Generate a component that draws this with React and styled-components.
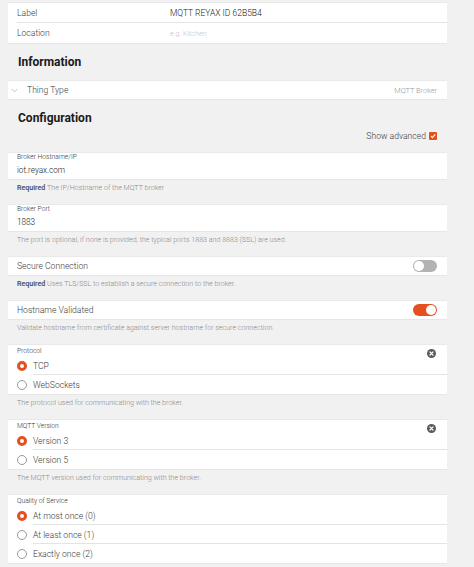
import React from 'react';
import styled, { createGlobalStyle, css } from 'styled-components';

const ACCENT = '#e5501e';

const GlobalStyle = createGlobalStyle`
  html, body {
    margin: 0;
    padding: 0;
    background: #f1f1f1;
  }

  body {
    font-family: Roboto, "Liberation Sans", sans-serif;
    color: #444;
  }
`;

/**
 * Data
 * ------------
 */

const protocols = ['TCP', 'WebSockets'];
const versions = ['Version 3', 'Version 5'];
const qos = ['At most once (0)', 'At least once (1)', 'Exactly once (2)'];

// Icons
function ChevronDown() {
  return (
    <svg width="7" height="5" viewBox="0 0 7 5">
      <path d="M0.8 1 L3.5 3.8 L6.2 1" fill="none" stroke="#bdbdbd" strokeWidth="0.9" />
    </svg>
  );
}

function ClearIcon() {
  return (
    <svg width="9" height="9" viewBox="0 0 10 10">
      <circle cx="5" cy="5" r="5" fill="#5a5a5a" />
      <path d="M3.3 3.3 L6.7 6.7 M6.7 3.3 L3.3 6.7" stroke="#fff" strokeWidth="1.3" strokeLinecap="round" />
    </svg>
  );
}

function CheckIcon() {
  return (
    <svg width="8" height="8" viewBox="0 0 8 8">
      <path d="M2 4.2 L3.4 5.6 L6.2 2.4" fill="none" stroke="#fff" strokeWidth="1.1" />
    </svg>
  );
}

// Components
function RadioGroup({ label, options, selected, clearable }) {
  return (
    <Panel>
      <GroupHeader>
        <SmallLabel>{label}</SmallLabel>
        {clearable && <ClearIcon />}
      </GroupHeader>
      {options.map((opt, i) => (
        <RadioRow key={opt} last={i === options.length - 1}>
          <Radio checked={i === selected} />
          <span>{opt}</span>
        </RadioRow>
      ))}
    </Panel>
  );
}

function Footer({ required, children }) {
  return (
    <Info>
      {required && <strong>Required </strong>}
      {children}
    </Info>
  );
}

function App() {
  return (
    <>
      <GlobalStyle />
      <Page>
        <Panel>
          <ListRow>
            <RowLabel>Label</RowLabel>
            <RowValue>MQTT REYAX ID 62B5B4</RowValue>
          </ListRow>
          <ListRow last>
            <RowLabel>Location</RowLabel>
            <RowValue placeholder>e.g. Kitchen</RowValue>
          </ListRow>
        </Panel>

        <SectionTitle>Information</SectionTitle>
        <Panel>
          <ThingRow>
            <ChevronDown />
            <ThingLabel>Thing Type</ThingLabel>
            <ThingValue>MQTT Broker</ThingValue>
          </ThingRow>
        </Panel>

        <SectionTitle compact>Configuration</SectionTitle>
        <Advanced>
          Show advanced
          <Checkbox>
            <CheckIcon />
          </Checkbox>
        </Advanced>

        <FieldPanel>
          <SmallLabel>Broker Hostname/IP</SmallLabel>
          <FieldValue>iot.reyax.com</FieldValue>
        </FieldPanel>
        <Footer required>The IP/Hostname of the MQTT broker</Footer>

        <FieldPanel>
          <SmallLabel>Broker Port</SmallLabel>
          <FieldValue>1883</FieldValue>
        </FieldPanel>
        <Footer>
          The port is optional, if none is provided, the typical ports 1883 and 8883 (SSL) are used.
        </Footer>

        <Panel>
          <ToggleRow>
            <span>Secure Connection</span>
            <Toggle />
          </ToggleRow>
        </Panel>
        <Footer required>Uses TLS/SSL to establish a secure connection to the broker.</Footer>

        <Panel>
          <ToggleRow>
            <span>Hostname Validated</span>
            <Toggle on />
          </ToggleRow>
        </Panel>
        <Footer>Validate hostname from certificate against server hostname for secure connection.</Footer>

        <RadioGroup label="Protocol" options={protocols} selected={0} clearable />
        <Footer>The protocol used for communicating with the broker.</Footer>

        <RadioGroup label="MQTT Version" options={versions} selected={0} clearable />
        <Footer>The MQTT version used for communicating with the broker.</Footer>

        <RadioGroup label="Quality of Service" options={qos} selected={0} />
      </Page>
    </>
  );
}

/**
 * Styles
 * ------------
 */

const Page = styled.div`
  width: 439px;
  margin-left: 8px;
  padding-top: 2px;
  padding-bottom: 4px;
`;

const Panel = styled.div`
  background: #fff;
  border-top: 1px solid #e9e9e9;
  border-bottom: 1px solid #e6e6e6;
`;

const separator = (left) => css`
  &::after {
    content: '';
    position: absolute;
    left: ${left}px;
    right: 0;
    bottom: 0;
    height: 1px;
    background: #e4e4e4;
  }
`;

const ListRow = styled.div`
  position: relative;
  display: flex;
  align-items: center;
  height: 20px;
  padding: 0 10px 0 9px;
  font-size: 8.6px;
  font-weight: 300;

  ${({ last }) => !last && separator(9)}
`;

const RowLabel = styled.span`
  width: 153px;
  color: #3a3a3a;
`;

const RowValue = styled.span`
  color: ${({ placeholder }) => (placeholder ? '#c4c4c4' : '#222')};
  font-size: ${({ placeholder }) => (placeholder ? '7.2px' : '8.5px')};
`;

const SectionTitle = styled.h2`
  margin: 0;
  padding: 11px 10px ${({ compact }) => (compact ? 0 : 11)}px;
  font-size: 12px;
  line-height: 14px;
  font-weight: 700;
  color: #1a1a1a;
`;

const ThingRow = styled.div`
  display: flex;
  align-items: center;
  height: 18px;
  padding: 0 10px 0 3px;
  font-size: 8.6px;
  font-weight: 300;
`;

const ThingLabel = styled.span`
  margin-left: 9px;
  color: #3a3a3a;
`;

const ThingValue = styled.span`
  margin-left: auto;
  font-size: 7.4px;
  color: #9a9a9a;
`;

const Advanced = styled.div`
  display: flex;
  justify-content: flex-end;
  align-items: center;
  gap: 3px;
  height: 22px;
  margin-bottom: 5px;
  padding-right: 10px;
  font-size: 8.6px;
  font-weight: 300;
  color: #3a3a3a;
`;

const Checkbox = styled.span`
  display: flex;
  width: 8px;
  height: 8px;
  background: ${ACCENT};
  border-radius: 1px;
`;

const FieldPanel = styled(Panel)`
  height: 28px;
  box-sizing: border-box;
  padding: 0 9px;
`;

const SmallLabel = styled.div`
  font-size: 6.7px;
  line-height: 8px;
  font-weight: 300;
  color: #333;
`;

const FieldValue = styled.div`
  margin-top: 3px;
  font-size: 8.2px;
  line-height: 12px;
  font-weight: 300;
  color: #222;
`;

const Info = styled.div`
  padding: 4px 9px 12px;
  font-size: 7.1px;
  line-height: 8px;
  font-weight: 300;
  color: #8a8a8a;

  strong {
    color: #444;
    font-weight: 500;
  }
`;

const ToggleRow = styled.div`
  display: flex;
  align-items: center;
  justify-content: space-between;
  height: 18px;
  padding: 0 10px 0 9px;
  font-size: 8.6px;
  font-weight: 300;
  color: #3a3a3a;
`;

const Toggle = styled.span`
  position: relative;
  width: 24px;
  height: 12px;
  border-radius: 6px;
  background: ${({ on }) => (on ? ACCENT : '#b3b3b3')};

  &::after {
    content: '';
    position: absolute;
    top: 1px;
    left: ${({ on }) => (on ? 13 : 1)}px;
    width: 10px;
    height: 10px;
    border-radius: 50%;
    background: #fff;
  }
`;

const GroupHeader = styled.div`
  display: flex;
  align-items: flex-start;
  justify-content: space-between;
  height: 11px;
  padding: 2px 11px 0 9px;
  box-sizing: border-box;

  svg {
    margin-top: 2px;
  }
`;

const RadioRow = styled.div`
  position: relative;
  display: flex;
  align-items: center;
  gap: 6px;
  height: 19px;
  padding-left: 9px;
  font-size: 8.6px;
  font-weight: 300;
  color: #3a3a3a;

  ${({ last }) => !last && separator(25)}
`;

const Radio = styled.span`
  box-sizing: border-box;
  width: 10px;
  height: 10px;
  border-radius: 50%;
  background: #fff;
  border: ${({ checked }) => (checked ? `3px solid ${ACCENT}` : '1px solid #9a9a9a')};
`;

export default App;
